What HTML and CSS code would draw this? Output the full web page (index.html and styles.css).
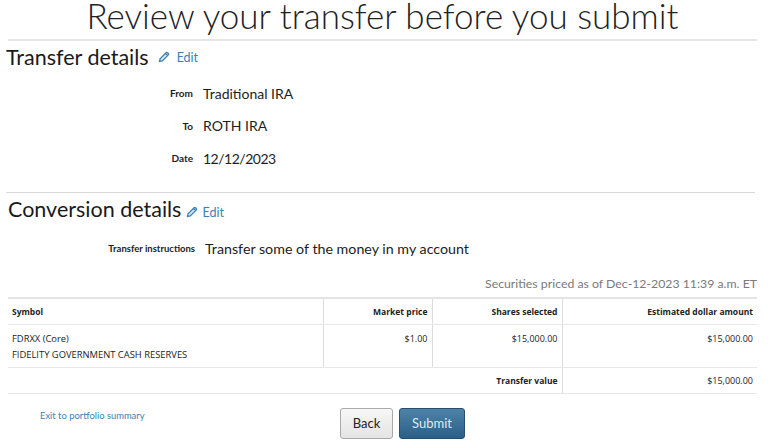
FILE: index.html
```html
<!DOCTYPE html>
<html lang="en">
<head>
  <meta charset="UTF-8" />
  <title>Review your transfer</title>
  <link rel="stylesheet" href="styles.css">
</head>
<body>

  <h1 class="page-title">Review your transfer before you submit</h1>

  <!-- Transfer details -->
  <section class="transfer">
    <div class="section-head">
      <h2>Transfer details</h2>
      <a href="#" class="edit">
        <svg viewBox="0 0 12 12" width="12" height="12"><path d="M1.5 10.5l.6-2.8 6-6a1 1 0 0 1 1.4 0l.8.8a1 1 0 0 1 0 1.4l-6 6z M7.4 2.4l2.2 2.2" fill="#dbe8f2" stroke="#3a7fb5" stroke-width="1.3"/></svg>
        Edit
      </a>
    </div>
    <dl class="details">
      <div class="detail"><dt>From</dt><dd>Traditional IRA</dd></div>
      <div class="detail"><dt>To</dt><dd>ROTH IRA</dd></div>
      <div class="detail"><dt>Date</dt><dd class="date">12/12/2023</dd></div>
    </dl>
  </section>

  <!-- Conversion details -->
  <section class="conversion">
    <div class="section-head">
      <h2>Conversion details</h2>
      <a href="#" class="edit">
        <svg viewBox="0 0 12 12" width="12" height="12"><path d="M1.5 10.5l.6-2.8 6-6a1 1 0 0 1 1.4 0l.8.8a1 1 0 0 1 0 1.4l-6 6z M7.4 2.4l2.2 2.2" fill="#dbe8f2" stroke="#3a7fb5" stroke-width="1.3"/></svg>
        Edit
      </a>
    </div>
    <div class="detail instructions">
      <span class="label">Transfer instructions</span>
      <span class="value">Transfer some of the money in my account</span>
    </div>
    <div class="priced">Securities priced as of Dec-12-2023 11:39 a.m. ET</div>

    <table class="securities">
      <colgroup>
        <col class="col-symbol"><col class="col-price"><col class="col-shares"><col class="col-amount">
      </colgroup>
      <thead>
        <tr>
          <th>Symbol</th>
          <th class="num">Market price</th>
          <th class="num">Shares selected</th>
          <th class="num">Estimated dollar amount</th>
        </tr>
      </thead>
      <tbody>
        <tr class="holding">
          <td class="fund">FDRXX (Core)<br>FIDELITY GOVERNMENT CASH RESERVES</td>
          <td class="num">$1.00</td>
          <td class="num">$15,000.00</td>
          <td class="num">$15,000.00</td>
        </tr>
        <tr class="total">
          <th colspan="3" class="num">Transfer value</th>
          <td class="num">$15,000.00</td>
        </tr>
      </tbody>
    </table>
  </section>

  <div class="actions">
    <a href="#" class="exit">Exit to portfolio summary</a>
    <button class="btn">Back</button>
    <button class="btn btn-primary">Submit</button>
  </div>

</body>
</html>
```

FILE: styles.css
```css
body {
  margin: 0;
  background: #fff;
  color: #1d1d1d;
  font-family: 'Lato', 'Open Sans', sans-serif;
  overflow: hidden;
}

.page-title {
  margin: 0 0 0 8px;
  width: 749px;
  height: 39px;
  border-bottom: 2px solid #e6e6e6;
  text-align: center;
  font-size: 35px;
  font-weight: 300;
  line-height: 31px;
  color: #222;
}

.section-head {
  display: flex;
  align-items: center;
}

.section-head h2 {
  margin: 0;
  font-size: 21.5px;
  font-weight: 400;
  color: #1a1a1a;
}

.edit {
  display: flex;
  align-items: center;
  gap: 7px;
  font-size: 12.5px;
  color: #3a7fb5;
  text-decoration: none;
}

.transfer {
  margin-left: 6px;
  width: 749px;
  height: 149px;
  padding-top: 2px;
  border-bottom: 1px solid #d8d8d8;
}

.transfer .section-head {
  gap: 9px;
  height: 28px;
}

.details {
  margin: 6px 0 0;
}

.detail {
  display: flex;
  align-items: center;
  height: 32.5px;
}

.detail dt {
  width: 187px;
  text-align: right;
  font-size: 10px;
  font-weight: 700;
}

.detail dd {
  margin: 0 0 0 10px;
  font-size: 14px;
}

.detail .date {
  letter-spacing: -0.5px;
}

.conversion {
  margin-left: 8px;
  width: 749px;
  padding-top: 2px;
}

.conversion .section-head {
  gap: 5px;
  height: 28px;
}

.conversion .edit {
  gap: 4px;
  margin-top: 6px;
}

.instructions {
  margin-top: 8px;
  height: 34px;
}

.instructions .label {
  width: 187px;
  text-align: right;
  font-size: 9.5px;
  font-weight: 700;
}

.instructions .value {
  margin-left: 10px;
  font-size: 14.25px;
}

.priced {
  margin-top: 11px;
  height: 21px;
  text-align: right;
  font-size: 12.3px;
  color: #7a7a7a;
}

.securities {
  width: 749px;
  table-layout: fixed;
  border-collapse: collapse;
  border-top: 2px solid #e4e4e4;
  font-family: 'Open Sans', sans-serif;
  font-size: 9px;
}

.col-symbol { width: 315px; }
.col-price { width: 109px; }
.col-shares { width: 130px; }
.col-amount { width: 195px; }

.securities th,
.securities td {
  padding: 0 4px;
  text-align: left;
  vertical-align: middle;
  border-bottom: 1px solid #e8e8e8;
  border-right: 1px solid #dcdcdc;
  color: #222;
}

.securities th {
  font-size: 8.5px;
}

.securities th:last-child,
.securities td:last-child {
  border-right: none;
}

.securities .num {
  text-align: right;
}

.securities thead tr {
  height: 26px;
}

.holding {
  height: 43px;
}

.holding td {
  vertical-align: top;
  padding-top: 6px;
  line-height: 16.5px;
}

.holding .fund {
  font-size: 9.4px;
}

.total {
  height: 26px;
}

.actions {
  display: flex;
  align-items: flex-start;
  margin-top: 14px;
  padding-left: 40px;
}

.exit {
  width: 300px;
  margin-top: 2px;
  font-size: 9.4px;
  color: #3a7fb5;
  text-decoration: none;
}

.btn {
  width: 53px;
  height: 31px;
  margin-right: 6px;
  padding: 0;
  border: 1px solid #a9a9a9;
  border-radius: 3px;
  background: linear-gradient(#f7f7f7, #e4e4e4);
  color: #222;
  font-family: 'Lato', sans-serif;
  font-size: 13px;
}

.btn-primary {
  width: 66px;
  border-color: #274f6d;
  background: linear-gradient(#4d83a8, #2a6088);
  color: #dfe9f0;
}
```
